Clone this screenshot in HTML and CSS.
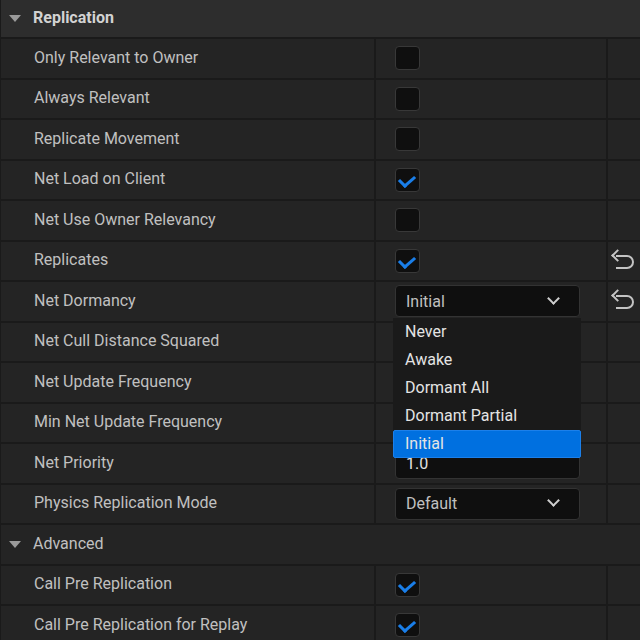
FILE: index.html
```html
<!DOCTYPE html>
<html lang="en">
    <head>
        <meta charset="UTF-8" />
        <link rel="stylesheet" href="styles.css">
        <title>Replication</title>
    </head>

    <body>
        <div class="panel">
            <div class="category open">
                <span class="arrow"></span>
                <span class="cat-name">Replication</span>
            </div>

            <div class="prop">
                <div class="name">Only Relevant to Owner</div>
                <div class="value"><span class="check"></span></div>
                <div class="extra"></div>
            </div>
            <div class="prop">
                <div class="name">Always Relevant</div>
                <div class="value"><span class="check"></span></div>
                <div class="extra"></div>
            </div>
            <div class="prop">
                <div class="name">Replicate Movement</div>
                <div class="value"><span class="check"></span></div>
                <div class="extra"></div>
            </div>
            <div class="prop">
                <div class="name">Net Load on Client</div>
                <div class="value"><span class="check on"></span></div>
                <div class="extra"></div>
            </div>
            <div class="prop">
                <div class="name">Net Use Owner Relevancy</div>
                <div class="value"><span class="check"></span></div>
                <div class="extra"></div>
            </div>
            <div class="prop">
                <div class="name">Replicates</div>
                <div class="value"><span class="check on"></span></div>
                <div class="extra"><span class="reset"></span></div>
            </div>
            <div class="prop">
                <div class="name">Net Dormancy</div>
                <div class="value">
                    <div class="combo">
                        <span>Initial</span>
                        <span class="chevron"></span>
                    </div>
                    <ul class="menu">
                        <li>Never</li>
                        <li>Awake</li>
                        <li>Dormant All</li>
                        <li>Dormant Partial</li>
                        <li class="selected">Initial</li>
                    </ul>
                </div>
                <div class="extra"><span class="reset"></span></div>
            </div>
            <!-- the number fields of these rows sit under the open list -->
            <div class="prop">
                <div class="name">Net Cull Distance Squared</div>
                <div class="value"><div class="field"></div></div>
                <div class="extra"></div>
            </div>
            <div class="prop">
                <div class="name">Net Update Frequency</div>
                <div class="value"><div class="field"></div></div>
                <div class="extra"></div>
            </div>
            <div class="prop">
                <div class="name">Min Net Update Frequency</div>
                <div class="value"><div class="field"></div></div>
                <div class="extra"></div>
            </div>
            <div class="prop">
                <div class="name">Net Priority</div>
                <div class="value"><div class="field">1.0</div></div>
                <div class="extra"></div>
            </div>
            <div class="prop">
                <div class="name">Physics Replication Mode</div>
                <div class="value">
                    <div class="combo">
                        <span>Default</span>
                        <span class="chevron"></span>
                    </div>
                </div>
                <div class="extra"></div>
            </div>

            <div class="category">
                <span class="arrow"></span>
                <span class="sub-name">Advanced</span>
            </div>

            <div class="prop">
                <div class="name">Call Pre Replication</div>
                <div class="value"><span class="check on"></span></div>
                <div class="extra"></div>
            </div>
            <div class="prop">
                <div class="name">Call Pre Replication for Replay</div>
                <div class="value"><span class="check on"></span></div>
                <div class="extra"></div>
            </div>
        </div>
    </body>
</html>
```

FILE: styles.css
```css
@charset "utf-8";

* {
    margin: 0;
    padding: 0;
    box-sizing: border-box;
}

body {
    background: #1a1a1a;
    font-family: Roboto, "Noto Sans", sans-serif;
    font-size: 16px;
    color: #c0c0c0;
    overflow: hidden;
}

.panel {
    display: flex;
    flex-direction: column;
    gap: 2px;
    padding-left: 1px;
}

/* category headers */
.category {
    height: 38.5px;
    display: flex;
    align-items: center;
    padding-bottom: 2px;
    background: #242424;
}

.category.open {
    height: 37px;
    background: #2d2d2d;
}

.arrow {
    width: 0;
    height: 0;
    margin: 2px 12px 0 8px;
    border-left: 6.5px solid transparent;
    border-right: 6.5px solid transparent;
    border-top: 7px solid #9a9a9a;
}

.cat-name {
    font-weight: 700;
    color: #d2d2d2;
}

.sub-name {
    color: #c0c0c0;
}

/* property rows */
.prop {
    height: 38.5px;
    display: grid;
    grid-template-columns: 373px 230px 1fr;
    column-gap: 2px;
}

.prop > div {
    background: #242424;
    display: flex;
    align-items: center;
}

.name {
    padding-left: 33px;
    padding-bottom: 2px;
}

.value {
    position: relative;
    padding-left: 19px;
}

.extra {
    justify-content: center;
}

/* checkbox */
.check {
    width: 25px;
    height: 24px;
    border: 1px solid #383838;
    border-radius: 4px;
    background: #0f0f0f;
    position: relative;
}

.check.on::after {
    content: "";
    position: absolute;
    left: 6px;
    top: 3px;
    width: 7px;
    height: 12px;
    border-right: 3px solid #1a7ee8;
    border-bottom: 3px solid #1a7ee8;
    transform: rotate(45deg) skewX(-4deg);
}

/* combo box and number field */
.combo,
.field {
    width: 185px;
    height: 32px;
    background: #0f0f0f;
    border: 1px solid #333;
    border-radius: 4px;
    display: flex;
    align-items: center;
    padding-left: 10px;
}

.combo {
    justify-content: space-between;
    padding-right: 21px;
}

.field {
    color: #e2e2e2;
}

.chevron {
    width: 9px;
    height: 9px;
    border-right: 2px solid #cfcfcf;
    border-bottom: 2px solid #cfcfcf;
    transform: translateY(-3px) rotate(45deg);
}

/* undo arrow */
.reset {
    width: 18px;
    height: 14px;
    margin-left: 2px;
    position: relative;
    border: 2px solid #c4c4c4;
    border-left: none;
    border-radius: 0 7px 7px 0;
    transform: translateY(1px);
}

.reset::before {
    content: "";
    position: absolute;
    left: -3px;
    top: -6px;
    width: 7px;
    height: 7px;
    border-left: 2px solid #c4c4c4;
    border-bottom: 2px solid #c4c4c4;
    transform: rotate(45deg);
}

/* open dropdown list */
.menu {
    position: absolute;
    top: 36px;
    left: 17px;
    width: 188px;
    list-style: none;
    background: #1a1a1a;
    z-index: 2;
}

.menu li {
    height: 28px;
    line-height: 28px;
    padding-left: 12px;
    color: #e4e4e4;
}

.menu li.selected {
    background: #0070e0;
    border: 1px solid #1c80ea;
    border-radius: 2px;
    line-height: 26px;
    padding-left: 11px;
}
```
